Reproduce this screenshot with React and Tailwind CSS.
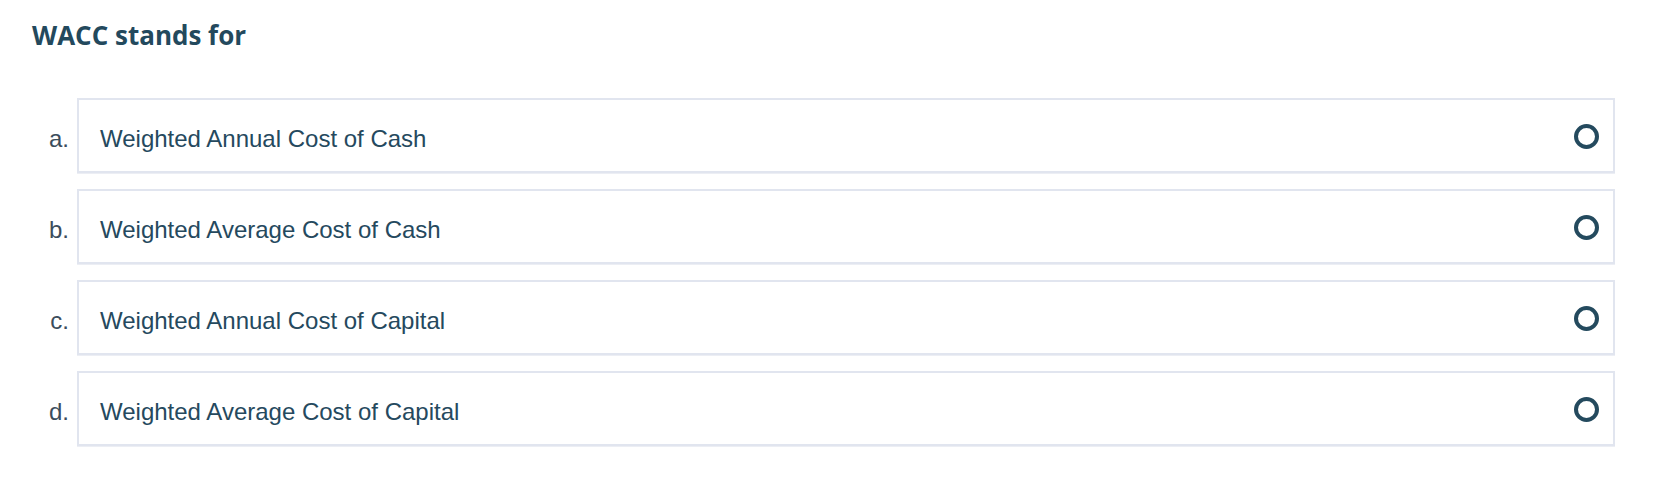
import React from 'react';

const options = [
  { key: 'a.', text: 'Weighted Annual Cost of Cash' },
  { key: 'b.', text: 'Weighted Average Cost of Cash' },
  { key: 'c.', text: 'Weighted Annual Cost of Capital' },
  { key: 'd.', text: 'Weighted Average Cost of Capital' },
];

function Option({ label, text }) {
  return (
    <div className="flex items-center">
      <div className="w-[77px] shrink-0 pr-[8px] pt-[6px] text-right text-[24px] text-[#3b4d5c]">{label}</div>
      <div className="flex h-[75px] flex-1 items-center justify-between border-2 border-[#e1e5ef] bg-white pl-[21px] pr-[14px] shadow-[0_1px_0_#eceef4]">
        <span className="pt-[6px] text-[24px] text-[#25495e]">{text}</span>
        <span className="mt-[2px] h-[25px] w-[25px] rounded-full border-4 border-[#244a5e]" />
      </div>
    </div>
  );
}

export default function App() {
  return (
    <div className="min-h-screen bg-white pr-[54px] font-['Liberation_Sans',Arial,sans-serif]">
      <h1 className="pl-[32px] pt-[18px] font-['Open_Sans',sans-serif] text-[26px] font-bold leading-[34px] text-[#23495d]">
        WACC stands for
      </h1>
      <div className="mt-[46px] flex flex-col gap-[16px]">
        {options.map((o) => (
          <Option key={o.key} label={o.key} text={o.text} />
        ))}
      </div>
    </div>
  );
}
